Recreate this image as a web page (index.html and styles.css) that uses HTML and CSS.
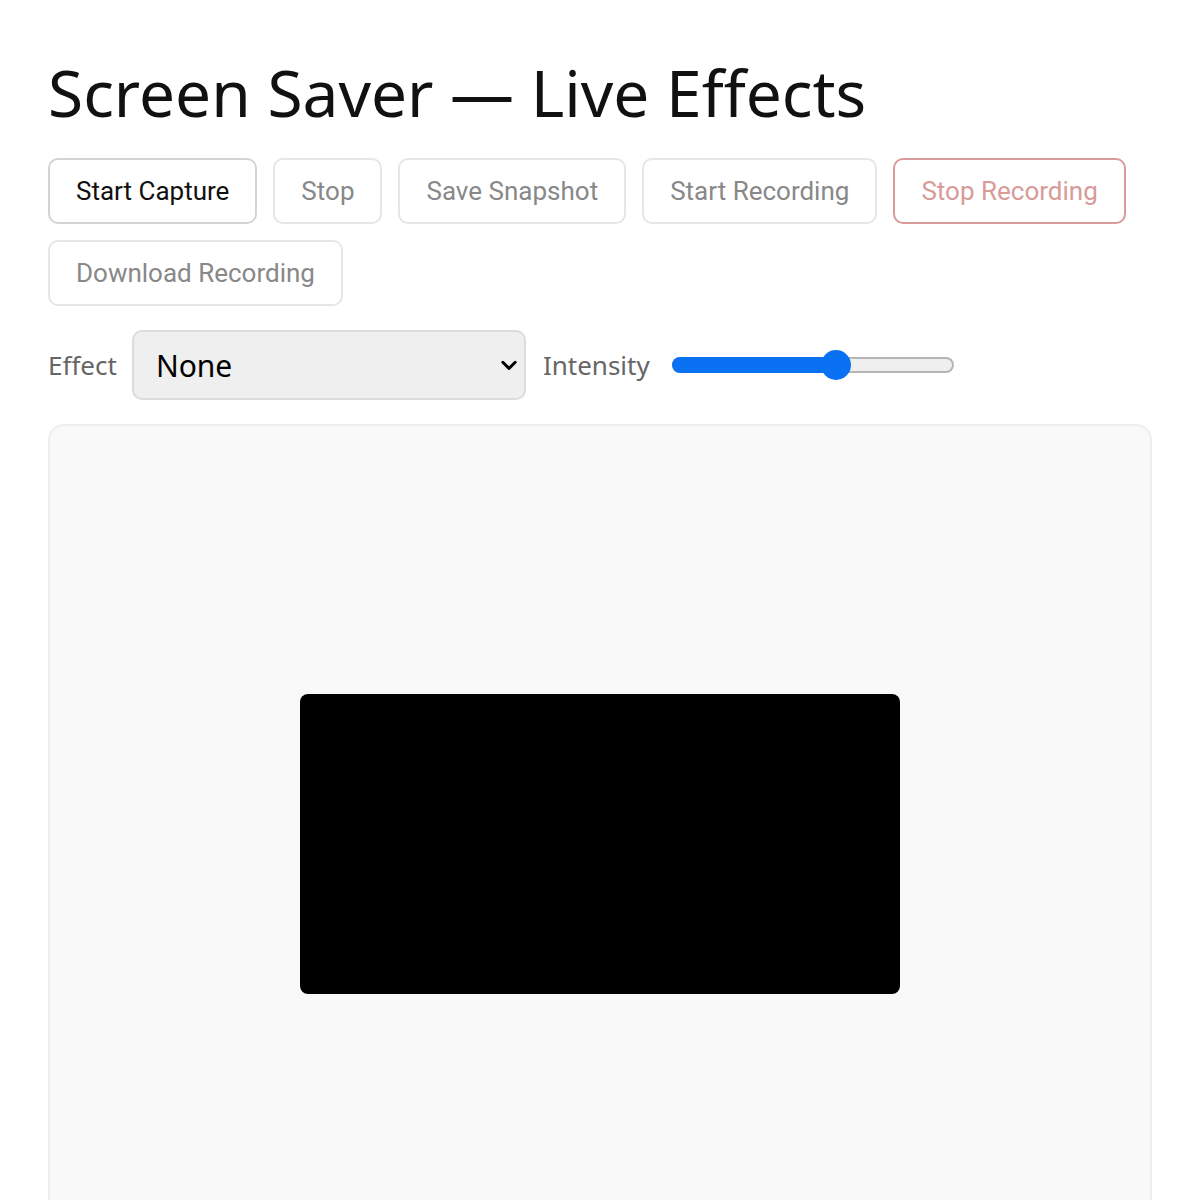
FILE: index.html
```html
<!DOCTYPE html>
<html>
<head>
<meta charset="utf-8">
<title>Screen Saver — Live Effects</title>
<link rel="stylesheet" href="styles.css">
</head>
<body>
<main class="app">
  <h1 class="title">Screen Saver — Live Effects</h1>
  <div class="toolbar">
    <button class="btn">Start Capture</button>
    <button class="btn" disabled>Stop</button>
    <button class="btn" disabled>Save Snapshot</button>
    <button class="btn" disabled>Start Recording</button>
    <button class="btn btn-danger" disabled>Stop Recording</button>
    <button class="btn" disabled>Download Recording</button>
  </div>
  <div class="controls">
    <label class="label" for="effect">Effect</label>
    <div class="select-wrap">
      <select id="effect" class="select">
        <option>None</option>
        <option>Grayscale</option>
        <option>Sepia</option>
        <option>Invert</option>
      </select>
      <svg class="chevron" viewBox="0 0 16 16" width="18" height="18" aria-hidden="true"><path d="M2.5 5.5 L8 11 L13.5 5.5" fill="none" stroke="#000" stroke-width="2.6" stroke-linecap="round" stroke-linejoin="round"/></svg>
    </div>
    <label class="label label-intensity" for="intensity">Intensity</label>
    <div class="range">
      <div class="range-fill" style="width: 58.4%"></div>
      <div class="range-thumb" style="left: 58.4%"></div>
    </div>
  </div>
  <section class="stage">
    <div class="screen"></div>
  </section>
</main>
</body>
</html>
```

FILE: styles.css
```css
html, body {
  margin: 0;
  padding: 0;
  background: #fff;
}

.app {
  padding: 48px 48px 0;
  font-family: "Noto Sans", "Open Sans", sans-serif;
  color: #111;
}

.title {
  margin: 0 0 20px;
  font-family: "Noto Sans", sans-serif;
  font-weight: 400;
  font-size: 64px;
  line-height: 90px;
  color: #111;
}

.toolbar {
  display: flex;
  flex-wrap: wrap;
  gap: 16px;
}

.btn {
  height: 66px;
  padding: 0 26px;
  font-family: Roboto, sans-serif;
  font-size: 26px;
  color: #111;
  background: #fff;
  border: 2px solid #d4d4d4;
  border-radius: 10px;
}

.btn:disabled {
  color: #888;
  border-color: #e6e6e6;
}

.btn-danger:disabled {
  color: #d99a9a;
  border-color: #d99a9a;
}

.controls {
  display: flex;
  align-items: center;
  margin-top: 24px;
  height: 70px;
}

.label {
  font-size: 26px;
  color: #666;
}

.select-wrap {
  position: relative;
  margin: 0 17px 0 15px;
}

.select {
  appearance: none;
  -webkit-appearance: none;
  width: 394px;
  height: 70px;
  padding: 0 22px;
  font-family: "Noto Sans", sans-serif;
  font-size: 30px;
  color: #000;
  background: #efefef;
  border: 2px solid #dcdcdc;
  border-radius: 10px;
}

.chevron {
  position: absolute;
  right: 8px;
  top: 26px;
  pointer-events: none;
}

.range {
  position: relative;
  margin-left: 22px;
  width: 282px;
  height: 16px;
  box-sizing: border-box;
  background: #efefef;
  border: 2px solid #b5b5b5;
  border-radius: 8px;
}

.range-fill {
  position: absolute;
  left: -2px;
  top: -2px;
  height: 16px;
  background: #0a72f2;
  border-radius: 8px;
}

.range-thumb {
  position: absolute;
  top: 50%;
  width: 30px;
  height: 30px;
  margin-left: -15px;
  transform: translateY(-50%);
  background: #0a72f2;
  border-radius: 50%;
}

.stage {
  margin-top: 24px;
  height: 836px;
  display: flex;
  align-items: center;
  justify-content: center;
  background: #f9f9f9;
  border: 2px solid #eee;
  border-radius: 16px;
}

.screen {
  width: 600px;
  height: 300px;
  background: #000;
  border-radius: 8px;
}
```
